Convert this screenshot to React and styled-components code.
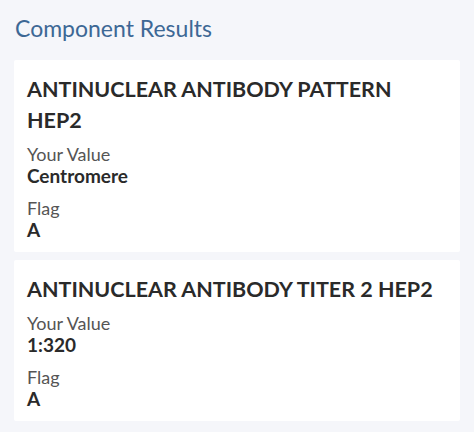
import React from "react";
import styled, { createGlobalStyle } from "styled-components";

const Global = createGlobalStyle`
  html, body { margin: 0; padding: 0; background: #f5f6fa; }
  body { font-family: Lato, "Noto Sans", sans-serif; }
`;

const Page = styled.div`
  padding: 14px 14px 9px 14px;
  display: flex;
  flex-direction: column;
`;

const Heading = styled.h2`
  margin: 0 0 18px 1px;
  font-size: 23px;
  font-weight: 400;
  line-height: 28px;
  color: #3d6895;
`;

const List = styled.div`
  display: flex;
  flex-direction: column;
  gap: 8px;
`;

const Card = styled.section`
  background: #ffffff;
  border-radius: 2px;
  padding: 14px 20px 11px 13px;
`;

const Title = styled.h3`
  margin: 0 0 7px 0;
  font-size: 21.5px;
  font-weight: 700;
  line-height: 31px;
  color: #2a2a2a;
`;

const Field = styled.div`
  display: flex;
  flex-direction: column;
  & + & { margin-top: 10px; }
`;

const Label = styled.span`
  font-size: 18px;
  line-height: 22px;
  color: #555555;
`;

const Value = styled.span`
  font-size: 19px;
  font-weight: 700;
  line-height: 22px;
  color: #2a2a2a;
`;

const results = [
  { name: "ANTINUCLEAR ANTIBODY PATTERN HEP2", value: "Centromere", flag: "A" },
  { name: "ANTINUCLEAR ANTIBODY TITER 2 HEP2", value: "1:320", flag: "A" },
];

export default function App() {
  return (
    <>
      <Global />
      <Page>
        <Heading>Component Results</Heading>
        <List>
          {results.map((r) => (
            <Card key={r.name}>
              <Title>{r.name}</Title>
              <Field>
                <Label>Your Value</Label>
                <Value>{r.value}</Value>
              </Field>
              <Field>
                <Label>Flag</Label>
                <Value>{r.flag}</Value>
              </Field>
            </Card>
          ))}
        </List>
      </Page>
    </>
  );
}
